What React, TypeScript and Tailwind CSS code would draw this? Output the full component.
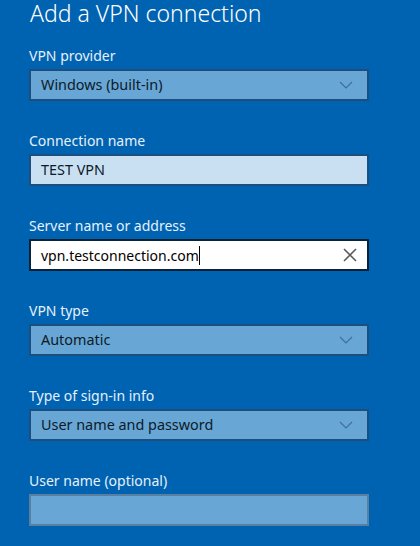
import React from "react";

const font = { fontFamily: '"Noto Sans", "Open Sans", sans-serif' };

function Chevron() {
  return (
    <svg width="14" height="8" viewBox="0 0 14 8" className="shrink-0">
      <path d="M1 1 L7 7 L13 1" fill="none" stroke="#3f6f9c" strokeWidth="1.2" />
    </svg>
  );
}

function Label({ children }: { children: React.ReactNode }) {
  return <div className="text-[14px] leading-[20px] text-[#e6f0fa] h-5">{children}</div>;
}

function Select({ value }: { value: string }) {
  return (
    <div className="mt-[3px] h-8 w-[340px] border-2 border-[#1d4f7e] bg-[#68a6d6] flex items-center pl-[10px] pr-[14px]">
      <span className="flex-1 text-[14.4px] text-[#0d1b28]">{value}</span>
      <Chevron />
    </div>
  );
}

export default function App() {
  return (
    <div className="w-[420px] h-[546px] bg-[#0063b1] overflow-hidden pl-[29px]" style={font}>
      <div className="text-[23px] font-light leading-[26px] text-white pl-[1px]">Add a VPN connection</div>
      <div className="mt-[20px] flex flex-col gap-[30px]">
        <div>
          <Label>VPN provider</Label>
          <Select value="Windows (built-in)" />
        </div>
        <div>
          <Label>Connection name</Label>
          <div className="mt-[3px] h-8 w-[340px] border-2 border-[#1d4f7e] bg-[#c9e0f2] flex items-center pl-[10px]">
            <span className="text-[14.4px] text-[#0d1b28]">TEST VPN</span>
          </div>
        </div>
        <div>
          <Label>Server name or address</Label>
          <div className="mt-[3px] h-8 w-[340px] border-2 border-[#0a2238] bg-white flex items-center pl-[10px] pr-[10px]">
            <span className="text-[14px] text-black">vpn.testconnection.com</span>
            <span className="w-px h-[19px] bg-black" />
            <span className="flex-1" />
            <svg width="14" height="14" viewBox="0 0 14 14">
              <path d="M1 1 L13 13 M13 1 L1 13" stroke="#5a5a5a" strokeWidth="1.6" />
            </svg>
          </div>
        </div>
        <div>
          <Label>VPN type</Label>
          <Select value="Automatic" />
        </div>
        <div>
          <Label>Type of sign-in info</Label>
          <Select value="User name and password" />
        </div>
        <div>
          <Label>User name (optional)</Label>
          <div className="mt-[3px] h-8 w-[340px] border-2 border-[#5b7f9f] bg-[#68a6d6]" />
        </div>
      </div>
    </div>
  );
}
